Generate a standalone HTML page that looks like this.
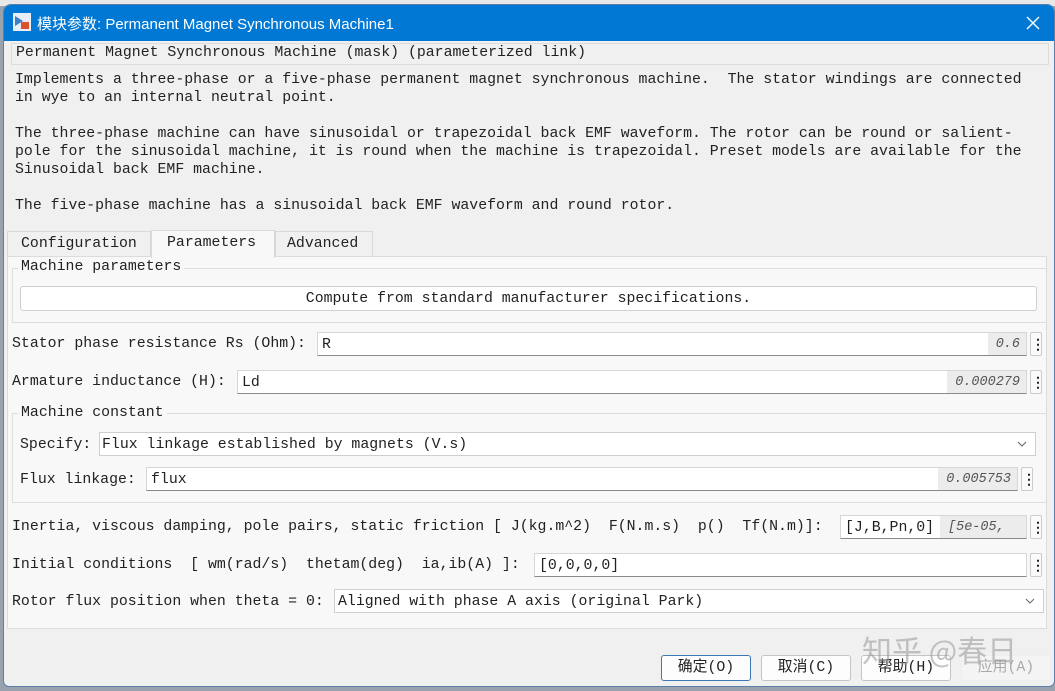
<!DOCTYPE html>
<html><head><meta charset="utf-8"><style>
*{box-sizing:border-box;margin:0;padding:0}
body{width:1055px;height:691px;overflow:hidden;background:#9aa3ad;position:relative;font-family:"Liberation Mono","Noto Sans CJK SC",monospace;font-size:14.85px;color:#222}
.a{position:absolute;white-space:pre}
#win{position:absolute;left:3px;top:4px;width:1052px;height:683px;background:#f0f0f0;border:1px solid #5a7fa8;border-radius:8px 8px 6px 6px;overflow:hidden}
#tb{position:absolute;left:0;top:0;right:0;height:36px;background:#0078d4}
.f{position:absolute;background:#fff;border:1px solid #d6d6d6;border-bottom:1px solid #8a8a8a;height:24px}
.v{position:absolute;right:0;top:0;bottom:0;background:#ececec;color:#555;font-style:italic;padding:4px 6px 0 8px;font-size:13.5px}
.k{position:absolute;width:12px;height:24px;border:1px solid #ccc;background:#fafafa;border-radius:2px;text-align:center;font-weight:bold;line-height:22px;font-size:14px;font-family:"Liberation Sans",sans-serif}
.dd{position:absolute;background:#fff;border:1px solid #cfcfcf;height:24px}
.btn{position:absolute;top:650px;height:26px;width:90px;border:1px solid #c4c4c4;background:#fdfdfd;border-radius:3px;text-align:center;line-height:24px;font-family:"Liberation Mono","Noto Sans CJK SC",monospace}
</style></head><body>
<div style="position:absolute;left:0;top:0;width:1055px;height:6px;background:#e8e8e8"></div>
<div id="win">
<div id="tb">
 <svg style="position:absolute;left:9px;top:8px" width="18" height="18"><rect x="0" y="0" width="18" height="18" fill="#e8eef5"/><path d="M2 3 L10 8 L2 13Z" fill="#3b7fc4"/><rect x="8" y="9" width="8" height="7" fill="#d9532c"/></svg>
 <div class="a" style="left:33px;top:8px;color:#fff;font-family:'Liberation Sans','Noto Sans CJK SC',sans-serif;font-size:15px">模块参数: Permanent Magnet Synchronous Machine1</div>
 <svg style="position:absolute;right:14px;top:11px" width="14" height="14"><path d="M1 1L13 13M13 1L1 13" stroke="#fff" stroke-width="1.4"/></svg>
</div>
<div style="position:absolute;left:7px;top:38px;width:1038px;height:22px;border:1px solid #dcdcdc"></div>
<div class="a" style="left:12px;top:40px">Permanent Magnet Synchronous Machine (mask) (parameterized link)</div>
<div class="a" style="left:11px;top:66px;line-height:18px">Implements a three-phase or a five-phase permanent magnet synchronous machine.  The stator windings are connected
in wye to an internal neutral point.

The three-phase machine can have sinusoidal or trapezoidal back EMF waveform. The rotor can be round or salient-
pole for the sinusoidal machine, it is round when the machine is trapezoidal. Preset models are available for the
Sinusoidal back EMF machine.

The five-phase machine has a sinusoidal back EMF waveform and round rotor.</div>
<div style="position:absolute;left:3px;top:226px;width:144px;height:26px;border:1px solid #d8d8d8;border-bottom:none;background:#f0f0f0"></div>
<div style="position:absolute;left:147px;top:225px;width:124px;height:28px;border:1px solid #d8d8d8;border-bottom:none;background:#f8f8f8;z-index:2"></div>
<div style="position:absolute;left:271px;top:226px;width:98px;height:26px;border:1px solid #d8d8d8;border-bottom:none"></div>
<div class="a" style="left:17px;top:231px">Configuration</div>
<div class="a" style="left:163px;top:230px;z-index:3">Parameters</div>
<div class="a" style="left:283px;top:231px">Advanced</div>
<div style="position:absolute;left:3px;top:251px;width:1040px;height:373px;background:#f8f8f8;border:1px solid #dcdcdc"></div>
<div style="position:absolute;left:8px;top:263px;width:1034px;height:55px;border:1px solid #dedede;border-right:none"></div>
<div class="a" style="left:14px;top:254px;background:#f8f8f8;padding:0 3px">Machine parameters</div>
<div style="position:absolute;left:16px;top:281px;width:1017px;height:25px;background:#fff;border:1px solid #cfcfcf;border-radius:3px;text-align:center;line-height:24px">Compute from standard manufacturer specifications.</div>
<div class="a" style="left:8px;top:331px">Stator phase resistance Rs (Ohm):</div>
<div class="f" style="left:313px;top:327px;width:710px"><span class="a" style="left:4px;top:4px">R</span><div class="v">0.6</div></div>
<div class="k" style="left:1026px;top:327px">⋮</div>
<div class="a" style="left:8px;top:369px">Armature inductance (H):</div>
<div class="f" style="left:233px;top:365px;width:790px"><span class="a" style="left:4px;top:4px">Ld</span><div class="v">0.000279</div></div>
<div class="k" style="left:1026px;top:365px">⋮</div>
<div style="position:absolute;left:8px;top:408px;width:1034px;height:90px;border:1px solid #dedede;border-right:none"></div>
<div class="a" style="left:14px;top:400px;background:#f8f8f8;padding:0 3px">Machine constant</div>
<div class="a" style="left:16px;top:432px">Specify:</div>
<div class="dd" style="left:95px;top:427px;width:937px"><span class="a" style="left:2px;top:4px">Flux linkage established by magnets (V.s)</span><svg style="position:absolute;right:8px;top:8px" width="10" height="6"><path d="M1 1L5 5L9 1" stroke="#666" fill="none"/></svg></div>
<div class="a" style="left:16px;top:467px">Flux linkage:</div>
<div class="f" style="left:142px;top:462px;width:872px"><span class="a" style="left:4px;top:4px">flux</span><div class="v">0.005753</div></div>
<div class="k" style="left:1017px;top:462px">⋮</div>
<div class="a" style="left:8px;top:514px">Inertia, viscous damping, pole pairs, static friction [ J(kg.m^2)  F(N.m.s)  p()  Tf(N.m)]:</div>
<div class="f" style="left:836px;top:510px;width:187px"><span class="a" style="left:4px;top:4px">[J,B,Pn,0]</span><div class="v" style="width:86px;overflow:hidden">[5e-05, …</div></div>
<div class="k" style="left:1026px;top:510px">⋮</div>
<div class="a" style="left:8px;top:552px">Initial conditions  [ wm(rad/s)  thetam(deg)  ia,ib(A) ]:</div>
<div class="f" style="left:530px;top:548px;width:493px"><span class="a" style="left:4px;top:4px">[0,0,0,0]</span></div>
<div class="k" style="left:1026px;top:548px">⋮</div>
<div class="a" style="left:8px;top:589px">Rotor flux position when theta = 0:</div>
<div class="dd" style="left:330px;top:584px;width:710px"><span class="a" style="left:3px;top:4px">Aligned with phase A axis (original Park)</span><svg style="position:absolute;right:8px;top:8px" width="10" height="6"><path d="M1 1L5 5L9 1" stroke="#666" fill="none"/></svg></div>
<div class="btn" style="left:657px;border-color:#3c78b4">确定(O)</div>
<div class="btn" style="left:757px">取消(C)</div>
<div class="btn" style="left:857px">帮助(H)</div>
<div class="btn" style="left:957px;color:#aaa;border-color:#eee;background:#f4f4f4">应用(A)</div>
<div class="a" style="left:858px;top:622px;color:rgba(150,150,150,.55);font-family:'Noto Sans CJK SC',sans-serif;font-size:30px">知乎 @春日</div>
</div>
</body></html>
